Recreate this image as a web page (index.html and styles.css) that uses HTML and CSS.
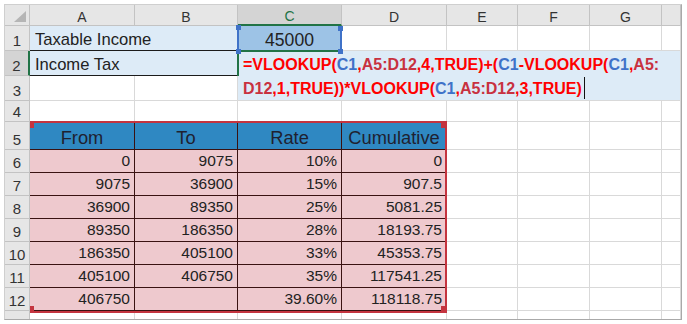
FILE: index.html
```html
<!DOCTYPE html>
<html lang="en">
<head>
<meta charset="utf-8">
<title>Income tax lookup</title>
<link rel="stylesheet" href="styles.css">
</head>
<body>
<div class="sheet">
  <div class="grid">
    <!-- column headings -->
    <div class="c corner"><span class="tri"></span></div>
    <div class="c ch">A</div>
    <div class="c ch">B</div>
    <div class="c ch sel">C</div>
    <div class="c ch">D</div>
    <div class="c ch">E</div>
    <div class="c ch">F</div>
    <div class="c ch">G</div>
    <div class="c ch"></div>

    <!-- row 1 -->
    <div class="c rh">1</div>
    <div class="c label">Taxable Income</div>
    <div class="c income">45000</div>
    <div class="c"></div><div class="c"></div><div class="c"></div><div class="c"></div><div class="c"></div>

    <!-- row 2: formula being edited in C2 -->
    <div class="c rh rsel">2</div>
    <div class="c label">Income Tax</div>
    <div class="c fx">
      <div>=VLOOKUP(<span class="ref1">C1</span>,<span class="ref2">A5:D12</span>,4,TRUE)+(<span class="ref1">C1</span>-VLOOKUP(<span class="ref1">C1</span>,<span class="ref2">A5:</span></div>
      <div><span class="ref2">D12</span>,1,TRUE))*VLOOKUP(<span class="ref1">C1</span>,<span class="ref2">A5:D12</span>,3,TRUE)<span class="caret"></span></div>
    </div>

    <!-- row 3 -->
    <div class="c rh">3</div>
    <div class="c"></div><div class="c"></div>

    <!-- row 4 -->
    <div class="c rh">4</div>
    <div class="c"></div><div class="c"></div><div class="c"></div><div class="c"></div>
    <div class="c"></div><div class="c"></div><div class="c"></div><div class="c"></div>

    <!-- row 5: bracket table heading -->
    <div class="c rh">5</div>
    <div class="c tb th">From</div>
    <div class="c tb th">To</div>
    <div class="c tb th">Rate</div>
    <div class="c tb th">Cumulative</div>
    <div class="c"></div><div class="c"></div><div class="c"></div><div class="c"></div>

    <!-- rows 6-12: brackets -->
    <div class="c rh">6</div>
    <div class="c tb td">0</div><div class="c tb td">9075</div><div class="c tb td">10%</div><div class="c tb td">0</div>
    <div class="c"></div><div class="c"></div><div class="c"></div><div class="c"></div>

    <div class="c rh">7</div>
    <div class="c tb td">9075</div><div class="c tb td">36900</div><div class="c tb td">15%</div><div class="c tb td">907.5</div>
    <div class="c"></div><div class="c"></div><div class="c"></div><div class="c"></div>

    <div class="c rh">8</div>
    <div class="c tb td">36900</div><div class="c tb td">89350</div><div class="c tb td">25%</div><div class="c tb td">5081.25</div>
    <div class="c"></div><div class="c"></div><div class="c"></div><div class="c"></div>

    <div class="c rh">9</div>
    <div class="c tb td">89350</div><div class="c tb td">186350</div><div class="c tb td">28%</div><div class="c tb td">18193.75</div>
    <div class="c"></div><div class="c"></div><div class="c"></div><div class="c"></div>

    <div class="c rh">10</div>
    <div class="c tb td">186350</div><div class="c tb td">405100</div><div class="c tb td">33%</div><div class="c tb td">45353.75</div>
    <div class="c"></div><div class="c"></div><div class="c"></div><div class="c"></div>

    <div class="c rh">11</div>
    <div class="c tb td">405100</div><div class="c tb td">406750</div><div class="c tb td">35%</div><div class="c tb td">117541.25</div>
    <div class="c"></div><div class="c"></div><div class="c"></div><div class="c"></div>

    <div class="c rh">12</div>
    <div class="c tb td">406750</div><div class="c tb td"></div><div class="c tb td">39.60%</div><div class="c tb td">118118.75</div>
    <div class="c"></div><div class="c"></div><div class="c"></div><div class="c"></div>

    <!-- row 13 -->
    <div class="c rh">13</div>
    <div class="c"></div><div class="c"></div><div class="c"></div><div class="c"></div>
    <div class="c"></div><div class="c"></div><div class="c"></div><div class="c"></div>
  </div>

  <!-- selection and reference outlines drawn over the cells -->
  <div class="marks">
    <div class="box-ref"><i class="knob tl"></i><i class="knob tr"></i><i class="knob bl"></i><i class="knob br"></i></div>
    <div class="box-active"></div>
    <div class="box-range"><i class="knob tl"></i><i class="knob tr"></i><i class="knob bl"></i><i class="knob br"></i></div>
  </div>
</div>
</body>
</html>
```

FILE: styles.css
```css
* {
  box-sizing: border-box;
}

body {
  margin: 0;
  background: #ffffff;
  font-family: "Liberation Sans", Arial, sans-serif;
  color: #222222;
}

.sheet {
  position: relative;
  margin: 4px 0 0 4px;
  width: 678px;
  height: 316px;
  border: 1px solid;
  border-color: #cfcfcf #a9a9a9 #a9a9a9 #cfcfcf;
  overflow: hidden;
}

.grid,
.marks {
  display: grid;
  grid-template-columns: 25px 105px 103px 104px 105px 71px 72px 72px 19px;
  grid-template-rows: 21px 25px 25px 25px 21px 28px repeat(8, 23px);
}

/* generic cell with light gridlines */
.c {
  display: flex;
  align-items: flex-end;
  white-space: nowrap;
  border-right: 1px solid #d9d9d9;
  border-bottom: 1px solid #d9d9d9;
  font-size: 15.5px;
  line-height: 18px;
}

/* headings */
.corner {
  background: #e6e6e6;
  border-color: #c3c3c3;
  justify-content: flex-end;
  padding: 0 3px 3px 0;
}

.tri {
  width: 0;
  height: 0;
  border-left: 12px solid transparent;
  border-bottom: 11px solid #b5b5b5;
}

.ch {
  background: #e6e6e6;
  border-color: #c3c3c3;
  justify-content: center;
  font-size: 14px;
  line-height: 16px;
  color: #333333;
}

.ch.sel {
  background: #d4d4d4;
  color: #217346;
  border-bottom: 2px solid #217346;
}

.rh {
  background: #e6e6e6;
  border-color: #c3c3c3;
  justify-content: center;
  font-size: 15px;
  line-height: 17px;
  padding-bottom: 1px;
  color: #333333;
}

.rh.rsel {
  background: #d4d4d4;
  border-right: 2px solid #217346;
}

/* A1:B2 labels */
.label {
  grid-column: span 2;
  background: #ddebf7;
  border-bottom-color: #1b1b1b;
  font-size: 16.6px;
  line-height: 19px;
  padding: 0 0 1px 5px;
}

.income {
  background: #9dc3e6;
  justify-content: center;
  font-size: 17.6px;
  line-height: 20px;
}

/* in-cell formula editor over C2:H3 */
.fx {
  grid-column: span 6;
  grid-row: span 2;
  display: block;
  background: #ddebf7;
  padding: 2px 0 0 5px;
  font-size: 16px;
  line-height: 24px;
  font-weight: bold;
  color: #ff0000;
}

.ref1 {
  color: #3f72c8;
}

.ref2 {
  color: #c8313f;
}

.caret {
  display: inline-block;
  width: 1px;
  height: 22px;
  margin-left: 2px;
  vertical-align: -5px;
  background: #111111;
}

/* bracket table */
.tb {
  border-color: #3a1212;
}

.th {
  background: #2f88c2;
  justify-content: center;
  font-size: 18.3px;
  line-height: 21px;
  padding-bottom: 1px;
  color: #1f2130;
}

.td {
  background: #eec9ce;
  justify-content: flex-end;
  padding: 0 4px 2px 0;
}

/* outlines layer */
.marks {
  position: absolute;
  inset: 0;
  pointer-events: none;
}

.box-ref {
  grid-area: 2 / 4 / 3 / 5;
  position: relative;
  margin-left: -1px;
  border-left: 2px solid #3f72c8;
  border-right: 2px solid #3f72c8;
}

.box-ref .knob {
  position: absolute;
  width: 5px;
  height: 5px;
  background: #3f72c8;
}

.box-ref .tl { left: -3px; top: -1px; }
.box-ref .tr { right: -3px; top: 0; }
.box-ref .bl { left: -3px; bottom: -3px; }
.box-ref .br { right: -3px; bottom: -3px; }

.box-active {
  grid-area: 3 / 4 / 4 / 5;
  margin: -1px 0 0 -1px;
  border-top: 2px solid #217346;
  border-left: 2px solid #217346;
}

.box-range {
  grid-area: 6 / 2 / 14 / 6;
  position: relative;
  margin: -1px 0 -2px 0;
  border: 2px solid #c4343f;
  border-left: 0;
}

.box-range .knob {
  position: absolute;
  width: 6px;
  height: 6px;
  background: #c4343f;
}

.box-range .tl { left: 0; top: -1px; width: 4px; }
.box-range .tr { right: -2px; top: -1px; }
.box-range .bl { left: 0; bottom: -1px; width: 4px; }
.box-range .br { right: -2px; bottom: -1px; }
```
